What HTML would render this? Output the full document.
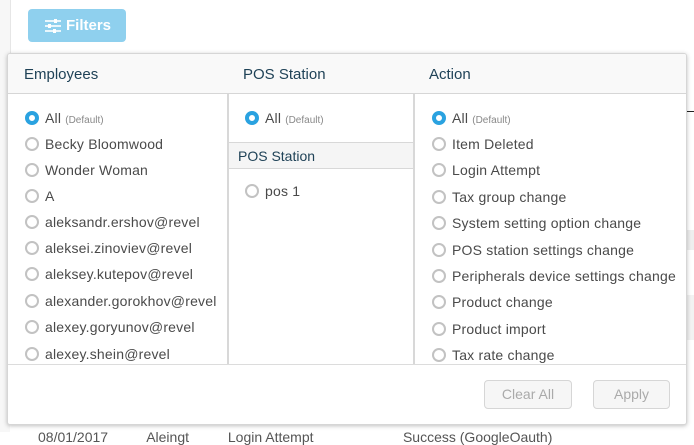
<!DOCTYPE html>
<html><head><style>
*{box-sizing:border-box;margin:0;padding:0}
body{width:694px;height:432px;overflow:hidden;background:#fff;font-family:"Liberation Sans",sans-serif;position:relative;color:#4a4a4a}
.abs{position:absolute}
.btnf{left:28px;top:9px;width:98px;height:33px;background:#8fd0ee;border-radius:4px;color:#fff;font-size:15px;font-weight:bold;line-height:33px;padding-left:38px}
.panel{left:7px;top:53px;width:680px;height:372px;background:#fff;border:1px solid #d6d6d6;border-radius:3px;box-shadow:0 1px 4px rgba(0,0,0,.25);overflow:hidden}
.hdr{position:absolute;left:0;top:0;width:680px;height:40px;background:#f9f9f9;border-bottom:1px solid #d6d6d6}
.hdr span{position:absolute;top:12px;font-size:15px;color:#1f4257}
.vl{position:absolute;top:40px;height:270px;width:2px;background:#d8d8d8}
.foot{position:absolute;left:0;top:310px;width:680px;height:62px;border-top:1px solid #dcdcdc}
.row{position:absolute;font-size:14px;letter-spacing:0.2px;color:#4a4a4a;white-space:nowrap;height:16px;line-height:16px}
.row i{display:inline-block;width:14px;height:14px;border:2px solid #c2c2c2;border-radius:50%;vertical-align:-2px;margin-right:6px;background:#fff}
.row i.on{border:4px solid #2aa2e0}
.row small{font-size:10px;color:#888;letter-spacing:0}
.btn{position:absolute;top:326px;height:29px;border:1px solid #d6d6d6;border-radius:4px;background:#f6f6f6;color:#aaa;font-size:14px;text-align:center;line-height:27px}
</style></head><body>
<div class="abs" style="left:10px;top:0;width:1px;height:53px;background:#e6e6e6"></div>
<div class="abs" style="left:0;top:0;width:10px;height:432px;background:#f7f7f7"></div>
<div class="abs" style="left:687px;top:111px;width:7px;height:1px;background:#222"></div>
<div class="abs" style="left:687px;top:230px;width:7px;height:20px;background:#eee"></div>
<div class="abs" style="left:687px;top:295px;width:7px;height:45px;background:#f2f2f2"></div>
<div class="abs" style="left:38px;top:429px;font-size:14px;color:#555;white-space:nowrap">08/01/2017 &nbsp;&nbsp;&nbsp;&nbsp;&nbsp;&nbsp;&nbsp;&nbsp; Aleingt &nbsp;&nbsp;&nbsp;&nbsp;&nbsp;&nbsp;&nbsp;&nbsp; Login Attempt &nbsp;&nbsp;&nbsp;&nbsp;&nbsp;&nbsp;&nbsp;&nbsp;&nbsp;&nbsp;&nbsp;&nbsp;&nbsp;&nbsp;&nbsp;&nbsp;&nbsp;&nbsp;&nbsp;&nbsp;&nbsp; Success (GoogleOauth)</div>
<div class="abs btnf"><svg class="abs" style="left:17px;top:10px" width="16" height="14" viewBox="0 0 16 14"><g stroke="#fff" stroke-width="1.6"><line x1="0" y1="2" x2="16" y2="2"/><line x1="0" y1="7" x2="16" y2="7"/><line x1="0" y1="12" x2="16" y2="12"/></g><g fill="#fff"><rect x="9" y="0" width="3" height="4"/><rect x="3" y="5" width="3" height="4"/><rect x="8" y="10" width="3" height="4"/></g></svg>Filters</div>
<div class="abs panel">
<div class="hdr"><span style="left:16px">Employees</span><span style="left:235px">POS Station</span><span style="left:421px">Action</span></div>
<div class="vl" style="left:219px"></div><div class="vl" style="left:405px"></div>
<div class="row" style="left:17px;top:56px"><i class="on"></i>All <small>(Default)</small></div>
<div class="row" style="left:17px;top:82px"><i></i>Becky Bloomwood</div>
<div class="row" style="left:17px;top:108px"><i></i>Wonder Woman</div>
<div class="row" style="left:17px;top:134px"><i></i>A</div>
<div class="row" style="left:17px;top:160px"><i></i>aleksandr.ershov@revel</div>
<div class="row" style="left:17px;top:186px"><i></i>aleksei.zinoviev@revel</div>
<div class="row" style="left:17px;top:212px"><i></i>aleksey.kutepov@revel</div>
<div class="row" style="left:17px;top:239px"><i></i>alexander.gorokhov@revel</div>
<div class="row" style="left:17px;top:265px"><i></i>alexey.goryunov@revel</div>
<div class="row" style="left:17px;top:292px"><i></i>alexey.shein@revel</div>
<div class="row" style="left:237px;top:56px"><i class="on"></i>All <small>(Default)</small></div>
<div class="abs" style="left:221px;top:88px;width:184px;height:27px;background:#f5f5f5;border-top:1px solid #d8d8d8;border-bottom:1px solid #d8d8d8;font-size:14px;color:#1f4257;padding:5px 0 0 9px">POS Station</div>
<div class="row" style="left:237px;top:129px"><i></i>pos 1</div>
<div class="row" style="left:424px;top:56px"><i class="on"></i>All <small>(Default)</small></div>
<div class="row" style="left:424px;top:82px"><i></i>Item Deleted</div>
<div class="row" style="left:424px;top:108px"><i></i>Login Attempt</div>
<div class="row" style="left:424px;top:135px"><i></i>Tax group change</div>
<div class="row" style="left:424px;top:161px"><i></i>System setting option change</div>
<div class="row" style="left:424px;top:188px"><i></i>POS station settings change</div>
<div class="row" style="left:424px;top:214px"><i></i>Peripherals device settings change</div>
<div class="row" style="left:424px;top:240px"><i></i>Product change</div>
<div class="row" style="left:424px;top:267px"><i></i>Product import</div>
<div class="row" style="left:424px;top:293px"><i></i>Tax rate change</div>
<div class="foot"></div>
<div class="btn" style="left:476px;width:88px">Clear All</div>
<div class="btn" style="left:585px;width:77px">Apply</div>
</div>
</body></html>
